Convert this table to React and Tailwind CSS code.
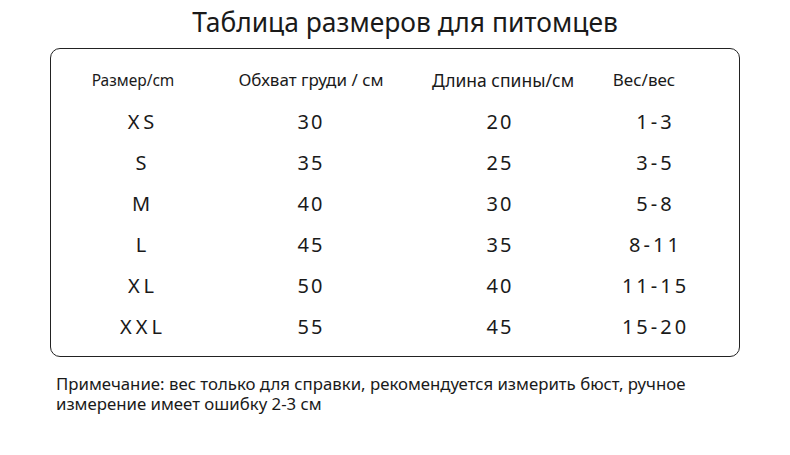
import React from "react";

const rows = [
  ["XS", "30", "20", "1-3"],
  ["S", "35", "25", "3-5"],
  ["M", "40", "30", "5-8"],
  ["L", "45", "35", "8-11"],
  ["XL", "50", "40", "11-15"],
  ["XXL", "55", "45", "15-20"],
];

export default function App() {
  return (
    <div className="w-[790px] h-[455px] bg-white text-[#1a1a1a] overflow-hidden" style={{ fontFamily: '"Noto Sans", sans-serif' }}>
      <h1 className="text-center text-[26.4px] leading-[30px] pt-[7px] pl-[20px] h-[48px]">Таблица размеров для питомцев</h1>
      <div className="ml-[50px] w-[690px] h-[309px] border border-[#222] rounded-[10px] pt-[18px]">
        <div className="grid grid-cols-[180px_160px_218px_90px] h-[24px] items-center text-[17px]">
          <div className="text-center pr-[16px] text-[15.5px]">Размер/cm</div>
          <div className="text-center whitespace-nowrap">Обхват груди / см</div>
          <div className="text-center pl-[6px] text-[17.5px] whitespace-nowrap">Длина спины/см</div>
          <div className="text-center pr-[20px]">Вес/вес</div>
        </div>
        <div className="mt-[10px]">
          {rows.map((r) => (
            <div key={r[0]} className="grid grid-cols-[180px_160px_218px_90px] h-[41px] items-center text-[20px] tracking-[2px]">
              <div className="text-center tracking-[4px] pl-[4px]">{r[0]}</div>
              <div className="text-center">{r[1]}</div>
              <div className="text-center">{r[2]}</div>
              <div className="text-center tracking-[3px] whitespace-nowrap pl-[3px]">{r[3]}</div>
            </div>
          ))}
        </div>
      </div>
      <p className="ml-[56px] mt-[17px] w-[690px] text-[16.8px] leading-[20px]">
        Примечание: вес только для справки, рекомендуется измерить бюст, ручное измерение имеет ошибку 2-3 см
      </p>
    </div>
  );
}
